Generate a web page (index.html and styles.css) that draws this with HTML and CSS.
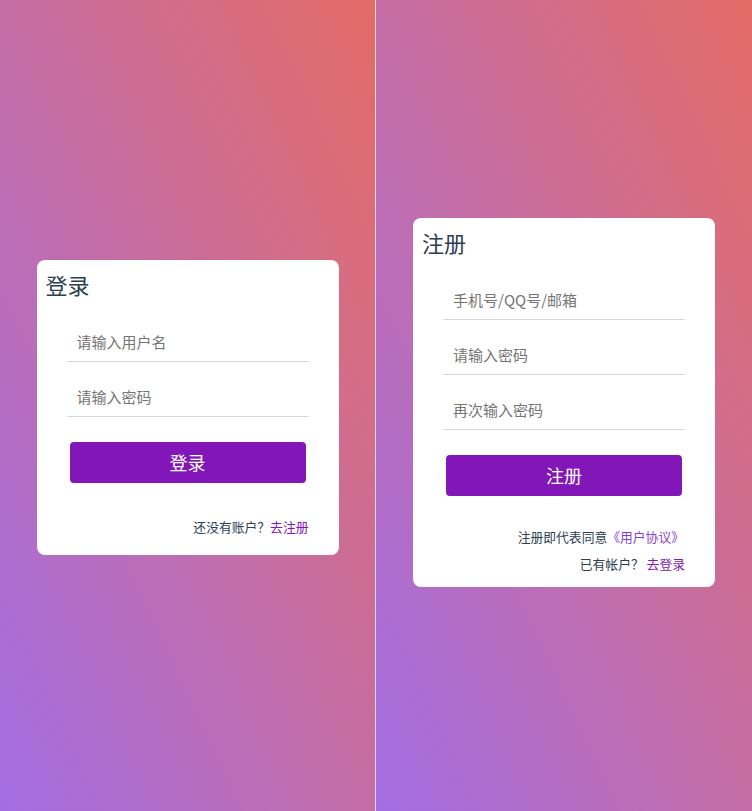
FILE: index.html
```html
<!DOCTYPE html>
<html lang="zh-CN">
<head>
<meta charset="utf-8">
<title>登录 / 注册</title>
<link rel="stylesheet" href="styles.css">
</head>
<body>
<div class="screens">
  <section class="panel panel-login">
    <div class="card card-login">
      <h2 class="card-title">登录</h2>
      <div class="form">
        <input class="field" type="text" placeholder="请输入用户名">
        <input class="field" type="password" placeholder="请输入密码">
        <button class="btn">登录</button>
      </div>
      <p class="foot foot-login">还没有账户？<a class="link" href="#">去注册</a></p>
    </div>
  </section>
  <section class="panel panel-register">
    <div class="card card-register">
      <h2 class="card-title">注册</h2>
      <div class="form">
        <input class="field" type="text" placeholder="手机号/QQ号/邮箱">
        <input class="field" type="password" placeholder="请输入密码">
        <input class="field" type="password" placeholder="再次输入密码">
        <button class="btn">注册</button>
      </div>
      <p class="foot foot-agree">注册即代表同意<a class="link link-agree" href="#">《用户协议》</a></p>
      <p class="foot foot-has">已有帐户？ <a class="link" href="#">去登录</a></p>
    </div>
  </section>
</div>
</body>
</html>
```

FILE: styles.css
```css
* { box-sizing: border-box; }
html, body { margin: 0; padding: 0; }
body {
  width: 752px;
  height: 811px;
  overflow: hidden;
  font-family: "Noto Sans CJK SC", "Noto Sans", sans-serif;
  color: #2c3e50;
}
.screens {
  display: flex;
  height: 811px;
}
.panel {
  height: 811px;
  display: flex;
  align-items: center;
  justify-content: center;
  background: linear-gradient(to top right, #a46ee4, #e46c66);
}
.panel-login { width: 375px; }
.panel-register { width: 377px; border-left: 1px solid #d6d6d6; }
.card {
  width: 302px;
  background: #fff;
  border-radius: 8px;
}
.card-login { margin-top: 4px; padding-bottom: 18px; }
.card-register { margin-top: -6px; padding-bottom: 13px; }
.card-title {
  margin: 9px 0 0 9px;
  font-size: 22px;
  line-height: 30px;
  font-weight: normal;
  color: #2c3e50;
}
.form {
  display: flex;
  flex-direction: column;
  align-items: center;
  margin-top: 26px;
}
.field {
  display: block;
  width: 242px;
  height: 37px;
  margin: 0 0 18px;
  padding: 0 10px 4px;
  border: none;
  border-bottom: 1px solid #d8d8d8;
  outline: none;
  background: transparent;
  font-family: inherit;
  font-size: 15px;
  color: #333;
}
.field:last-of-type { margin-bottom: 25px; }
.field::placeholder { color: #757575; }
.btn {
  display: block;
  width: 236px;
  height: 41px;
  border: none;
  border-radius: 4px;
  background: #8316b8;
  color: #fff;
  font-family: inherit;
  font-size: 18px;
  line-height: 41px;
  padding: 0;
}
.foot {
  margin: 0 30px 0 0;
  text-align: right;
  font-size: 12.8px;
  line-height: 20px;
  color: #2c3e50;
}
.foot-login { margin-top: 34px; }
.foot-agree { margin-top: 31px; margin-right: 31px; }
.foot-has { margin-top: 7px; }
.link { color: #8316b8; text-decoration: none; }
.link-agree { color: #8a3fcc; }
```
